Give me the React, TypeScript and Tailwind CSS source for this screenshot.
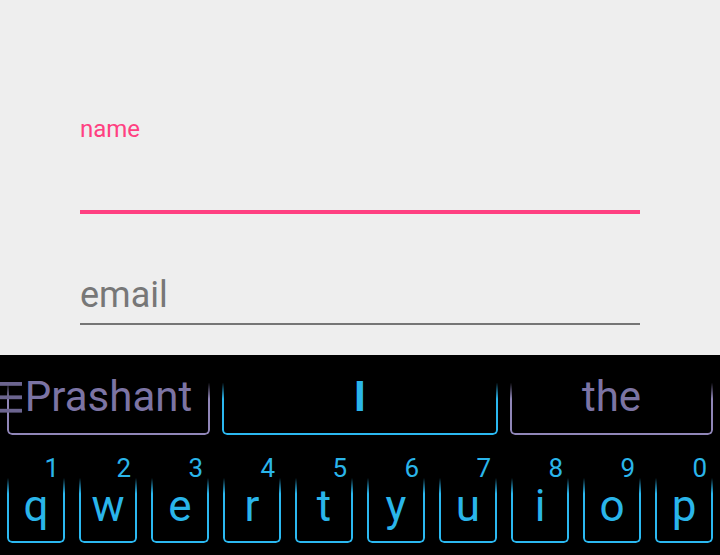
const numberRow = ['1', '2', '3', '4', '5', '6', '7', '8', '9', '0'];
const letterRow = ['q', 'w', 'e', 'r', 't', 'y', 'u', 'i', 'o', 'p'];

function Frame({ tone, fade }: { tone: 'cyan' | 'purple'; fade: 'key' | 'strip' }) {
  const color =
    tone === 'cyan'
      ? 'border-[#2bb8f0] shadow-[0_0_6px_1px_rgba(30,165,230,0.8)]'
      : 'border-[#9086b8] shadow-[0_0_6px_1px_rgba(135,120,180,0.7)]';
  const mask =
    fade === 'key'
      ? '[mask-image:linear-gradient(to_bottom,transparent_26%,black_44%)] [-webkit-mask-image:linear-gradient(to_bottom,transparent_26%,black_44%)]'
      : '[mask-image:linear-gradient(to_bottom,transparent_30%,black_52%)] [-webkit-mask-image:linear-gradient(to_bottom,transparent_30%,black_52%)]';
  return (
    <span
      className={`pointer-events-none absolute inset-0 rounded-b-[5px] border-2 border-t-0 ${color} ${mask}`}
    />
  );
}

function Suggestion({ text, tone, bold }: { text: string; tone: 'cyan' | 'purple'; bold?: boolean }) {
  return (
    <div className="relative h-[75px] pt-[16px] text-center">
      <Frame tone={tone} fade="strip" />
      <span
        className={`block text-[42px] leading-[42px] ${
          tone === 'cyan' ? 'text-[#2ab5ea]' : 'text-[#7c74a4]'
        } ${bold ? 'font-bold' : 'font-normal'}`}
      >
        {text}
      </span>
    </div>
  );
}

function Key({ letter, digit }: { letter: string; digit: string }) {
  return (
    <div className="relative h-[88px] text-[#2ab5ea]">
      <Frame tone="cyan" fade="key" />
      <div className="pr-[6px] text-right text-[26px] leading-[26px]">{digit}</div>
      <div className="mt-[3px] text-center text-[44px] leading-[44px]">{letter}</div>
    </div>
  );
}

export default function App() {
  return (
    <div className="flex h-[555px] w-[720px] flex-col overflow-hidden bg-[#eeeeee] font-['Roboto',sans-serif]">
      {/* form */}
      <div className="flex-1 px-20 pt-[117px]">
        <label className="block text-[24px] leading-6 text-[#ff4081]">name</label>
        <div className="h-[73px] border-b-4 border-[#ff4081]" />
        <div className="mt-[63px] h-[48px] border-b-2 border-[#757575] text-[36px] leading-9 text-[#777777]">
          email
        </div>
      </div>

      {/* keyboard */}
      <div className="relative h-[200px] bg-black px-[7px] pt-[5px]">
        <div className="grid grid-cols-[203px_1fr_203px] gap-3">
          <Suggestion text="Prashant" tone="purple" />
          <Suggestion text="I" tone="cyan" bold />
          <Suggestion text="the" tone="purple" />
        </div>

        <svg
          className="absolute left-0 top-[27px]"
          width="23"
          height="31"
          viewBox="0 0 23 31"
          fill="#6c6590"
        >
          <rect x="0" y="0" width="22" height="3.8" />
          <rect x="0" y="13.4" width="22" height="3.8" />
          <rect x="0" y="26.8" width="22" height="3.8" />
        </svg>

        <div className="mt-5 grid grid-cols-10 gap-[14px]">
          {letterRow.map((l, i) => (
            <Key key={l} letter={l} digit={numberRow[i]} />
          ))}
        </div>
      </div>
    </div>
  );
}
